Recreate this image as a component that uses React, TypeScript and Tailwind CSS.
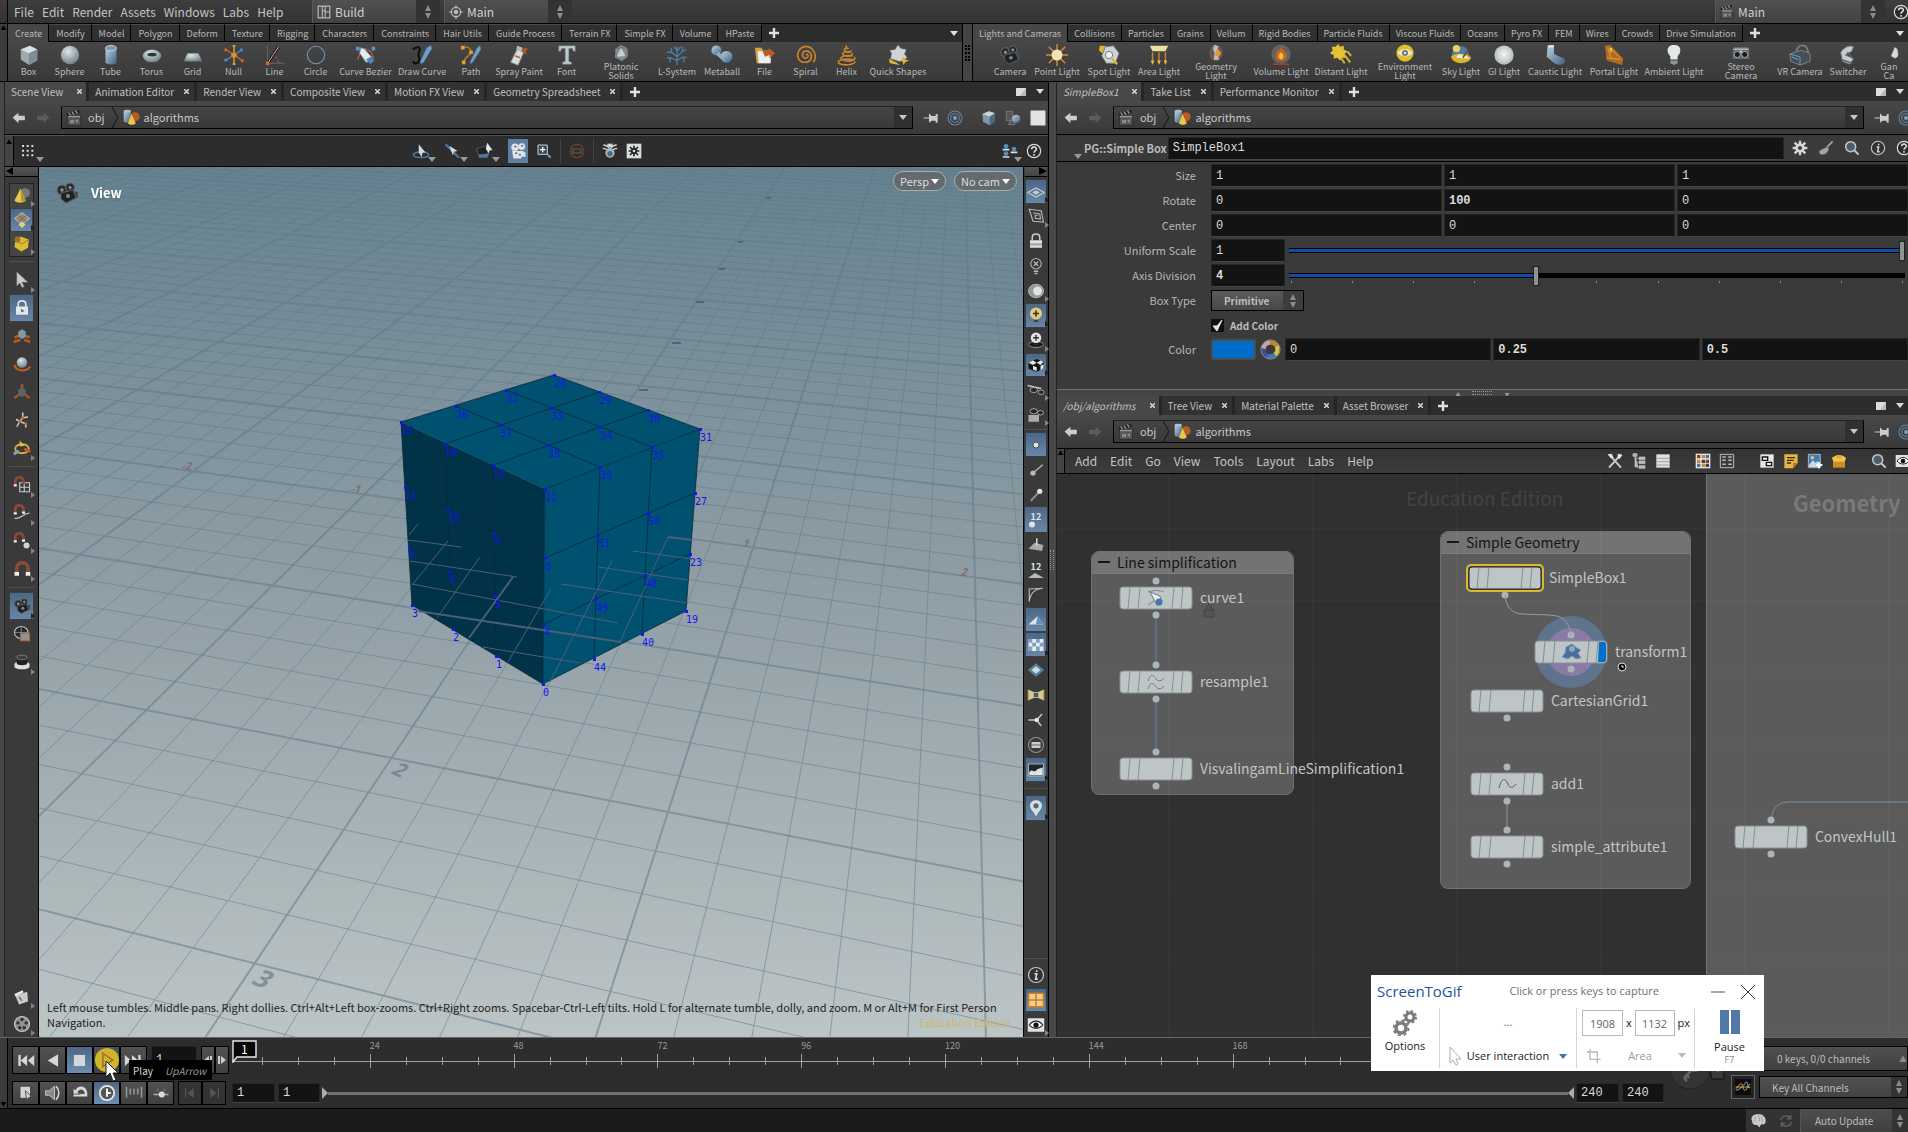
import { useState, type ReactNode } from 'react'
import clsx from 'clsx'

const metal = 'url(#metal)'
const blue = 'url(#blue)'

// 24x24 drawings, shared by the shelves and the toolbars
const glyphs: Record<string, ReactNode> = {
  box: (
    <>
      <path d="M3 6 13 2l8 4v12l-9 5-9-6z" fill="#9aabb0" />
      <path d="M3 6l10-4 8 4-9 4z" fill="#d8e0e2" />
      <path d="M12 10l9-4v12l-9 5z" fill="#7b8f97" />
    </>
  ),
  sphere: <circle cx="12" cy="12" r="10" fill={metal} />,
  tube: (
    <>
      <path d="M6 4v16c0 3 12 3 12 0V4z" fill={blue} />
      <ellipse cx="12" cy="4.5" rx="6" ry="3" fill="#7d99ad" stroke="#c5d3da" />
    </>
  ),
  torus: (
    <>
      <ellipse cx="12" cy="13" rx="10" ry="7" fill={metal} />
      <ellipse cx="12" cy="11.5" rx="5" ry="2" fill="#333" />
    </>
  ),
  grid: <path d="M6 10h12l4 9H2z" fill={metal} />,
  null: (
    <>
      <path d="M12 1v22" stroke="#d9a62e" strokeWidth="1.5" />
      <path d="M3 6l18 12" stroke="#cf6b24" strokeWidth="1.5" />
      <path d="M3 18 21 6" stroke="#4f8cc4" strokeWidth="1.5" />
      <path d="M12 9v6M9 12h6" stroke="#e08f2d" strokeWidth="3" />
      <path d="M12 1v2M12 21v2" stroke="#d9a62e" strokeWidth="3" />
      <path d="M3 5v3M21 17v3" stroke="#cf6b24" strokeWidth="3" />
      <path d="M20 5v3M3 16v3" stroke="#4f8cc4" strokeWidth="3" />
    </>
  ),
  line: (
    <>
      <path d="M4 2v19h18" stroke="#6a6a6a" fill="none" />
      <path d="M4 21 16 3" stroke="#111" strokeWidth="3" />
      <path d="M4 21 16 3" stroke="#ddd" strokeWidth="1" />
      <path d="M9 10l4 4 4 8" stroke="#c45a28" fill="none" strokeDasharray="3 2" />
      <path d="M2 19h4v4H2z" fill="#cf6b24" />
    </>
  ),
  circle: <circle cx="12" cy="12" r="9.5" fill="none" stroke="#7393ab" strokeWidth="1.2" />,
  bezier: (
    <>
      <path d="M3 5h9M3 17C5 5 19 1 20 17" fill="none" stroke="#c2622b" strokeWidth="1.3" />
      <path d="M6 4l4 1 8 9-1 5-5 1-7-10z" fill="#e6ebed" stroke="#5c7f9b" />
      <path d="M12 17l5 5 4-4-4-4z" fill="#4c86bd" />
      <path d="M1 3h4v4H1zM18 3h4v4h-4z" fill="#5a95c9" />
    </>
  ),
  draw: (
    <>
      <path d="M2 6c6-4 9-3 7 2-2 4-1 4 0 7 1 6-5 8-7 4" fill="none" stroke="#0c0c0c" strokeWidth="2.2" />
      <path d="M22 1l-5 3-7 15 1 3 3-2L23 5z" fill="#6f9fc8" stroke="#345a7c" strokeWidth=".7" />
    </>
  ),
  path: (
    <>
      <path d="M3 4c8-3 12 5 6 9-4 3-5 5-5 8" fill="none" stroke="#b9772c" strokeWidth="1.6" />
      <path d="M22 1l-4 4-7 14v3l3-2L23 6z" fill="#6f9fc8" stroke="#345a7c" strokeWidth=".7" />
      <path d="M1 2h4v4H1zM10 7h4v4h-4zM2 18h4v4H2z" fill="#eb9c2f" />
    </>
  ),
  spray: (
    <>
      <path d="M10 6l7 3-6 14-8-3z" fill="#d8dedf" stroke="#8f9ca1" />
      <path d="M10 2l6 2-1 4-6-2z" fill="#b3bec3" />
      <path d="M15 4l7 1-3 3 2 4-5-3z" fill="#b95225" />
      <path d="M8 13l5 2" stroke="#cf5f2c" strokeWidth="2" />
    </>
  ),
  font: <path d="M3 2h18v6h-2l-1-3h-4v14l3 1v2H7v-2l3-1V5H6L5 8H3z" fill="#bcc9cc" stroke="#6c7b80" strokeWidth=".6" />,
  platonic: (
    <>
      <path d="M12 1l9 5v11l-8 6-9-5V7z" fill="#858d90" />
      <path d="M12 5l6 11-12 1z" fill="#c9cfd1" />
      <path d="M12 1v4l9 1-3 10 3 1-8 6-7-6-2-10 8-2" fill="none" stroke="#555c5f" strokeWidth=".7" />
    </>
  ),
  lsystem: (
    <path
      d="M12 23v-9M12 14 6 9M12 14l6-6M12 18l-7-3M12 18l7-4M12 13V3M12 7 9 3M12 8l4-5M6 9V4M6 9H1M5 15H1M18 8V3M18 8l4-2M19 14l4 1M19 14l1 6M5 15l-1 5"
      fill="none"
      stroke="#4d80ab"
      strokeWidth="1.4"
    />
  ),
  metaball: (
    <>
      <circle cx="6" cy="7" r="5.5" fill={blue} />
      <circle cx="17" cy="14" r="6.5" fill={blue} />
      <path d="M7 10l5 5" stroke="#8daec6" strokeWidth="4" />
    </>
  ),
  file: (
    <>
      <path d="M1 4h7l2 3h8v14H3z" fill="#d5a24c" />
      <path d="M4 8h15l-1 13H5z" fill="#eceeee" />
      <path d="M9 7h7V4l7 6-6 6v-4l-5 2z" fill="#bc5a24" />
    </>
  ),
  spiral: (
    <path
      d="M12 12c1-2 3 0 2 2-2 3-6 1-6-2 0-5 6-6 9-2 3 5-1 10-6 10C4 20 1 13 4 8c3-6 11-7 15-2 4 4 4 10 1 14"
      fill="none"
      stroke="#cf8430"
      strokeWidth="1.7"
    />
  ),
  helix: (
    <path
      d="M12 2c-3 1 0 3 2 3M14 5c-6-1-7 3-1 4 3 0 4-1 3-2M16 9C8 7 4 12 11 13c6 1 8-2 6-3M18 13C8 11 1 16 9 18c8 2 13-1 11-4M20 18C13 15 0 17 3 21c5 3 17 2 18-2"
      fill="none"
      stroke="#cf8430"
      strokeWidth="1.7"
    />
  ),
  quick: (
    <>
      <path d="M12 1l3 4 6 1-2 5 3 4-8 4-10-3 1-6-2-3 6-1z" fill="#cfd3d4" stroke="#81888b" strokeWidth=".6" />
      <path d="M2 16l8 4 4 3-11-2zM18 13l2 4 4 1-4 2-2 3-1-4-3-1 3-2z" fill="#d8b92e" />
    </>
  ),
  camera: (
    <>
      <circle cx="7" cy="9" r="5" fill="#2a2d2f" stroke="#676d70" />
      <circle cx="15" cy="6.500" r="4.500" fill="#2a2d2f" stroke="#676d70" />
      <path d="M6 12l12-3 3 8-10 5-5-4z" fill="#1f2122" stroke="#5a6063" />
      <path d="M19 10l4 1v6l-3-1z" fill="#474d50" />
      <circle cx="7" cy="9" r="1.700" fill="#8c9598" />
      <circle cx="15" cy="6.500" r="1.500" fill="#8c9598" />
      <circle cx="13" cy="15" r="2" fill="#7e888c" />
    </>
  ),
  point: (
    <>
      <path d="M12 0v24M0 12h24M3 3l18 18M21 3 3 21" stroke="#d38a2b" strokeWidth="1.6" />
      <circle cx="12" cy="12" r="6" fill="#f0e3b5" />
    </>
  ),
  spot: (
    <>
      <path d="M2 2h6l5 4-6 6-6-5z" fill="#d8b832" />
      <path d="M8 3l9-1 6 8-4 11H9l-5-8z" fill="#cdd3d5" stroke="#6d7578" />
      <circle cx="12" cy="12" r="4" fill="#eff1f1" stroke="#6d7578" />
      <path d="M14 15l7 7" stroke="#d8b832" strokeWidth="2.500" />
    </>
  ),
  area: (
    <>
      <path d="M2 2h20l-3 6H5z" fill="#f1dfa2" />
      <path d="M5 9v12M12 9v12M19 9v12" stroke="#c88428" strokeWidth="1.600" />
      <path d="M3 18h4l-2 5zM10 18h4l-2 5zM17 18h4l-2 5z" fill="#e8b73b" />
    </>
  ),
  geoLight: (
    <>
      <ellipse cx="12" cy="12" rx="9" ry="11" fill="#775a57" opacity=".8" />
      <path d="M10 1l5 2-1 8 2 10h-7l1-9-2-6z" fill="#b9bfc2" />
      <path d="M14 6l5 6-3 5-6-2z" fill="#dd9c2e" />
    </>
  ),
  volume: (
    <>
      <circle cx="12" cy="11" r="10.500" fill="#6c6c6c" opacity=".8" />
      <path d="M12 2c0 5 7 6 6 12-1 6-11 6-12 0 0-3 2-4 2-7 2 1 4-1 4-5z" fill="#cf6524" />
      <path d="M12 9c3 3 4 6 0 8-4-2-3-5 0-8z" fill="#f0c53c" />
      <path d="M3 22h18" stroke="#94481f" strokeWidth="2" />
    </>
  ),
  distant: (
    <>
      <path d="M9 0l2 3 4-1v4l4 2-3 3 1 4-4 0-2 3-3-3-4 1 0-4-4-2 3-3-1-4 4 0z" fill="#e5c234" />
      <path d="M12 15l4 6M16 12l6 8M19 8l4 5" stroke="#dcb62f" strokeWidth="2" />
    </>
  ),
  env: (
    <>
      <circle cx="12" cy="12" r="11.500" fill="#dfbf2c" />
      <path d="M2 12c5-7 15-7 20 0-5 6-15 6-20 0z" fill="#eee7c6" />
      <circle cx="12" cy="12" r="4" fill="#6f7b80" />
      <circle cx="12" cy="12" r="1.500" fill="#f5f5f5" />
    </>
  ),
  sky: (
    <>
      <path d="M2 13C1 4 13-1 18 5l4 9z" fill="#517ca0" />
      <circle cx="7" cy="5" r="4" fill="#ead26b" />
      <path d="M1 14c4-5 18-4 22 1-2 7-19 9-22-1z" fill="#dcb42c" />
      <path d="M7 15c1-5 6-5 8-1 2-2 5 0 5 2z" fill="#e8ecee" />
      <path d="M14 15l6-9" stroke="#754c1a" strokeWidth="1.500" />
    </>
  ),
  gi: <circle cx="12" cy="12" r="10.500" fill="url(#white)" />,
  caustic: (
    <>
      <path d="M4 2l7-1v10l11 5c4 6-7 9-12 4L3 14z" fill={blue} />
      <ellipse cx="7.500" cy="2.500" rx="3.500" ry="1.500" fill="#d8e1e5" />
    </>
  ),
  portal: (
    <>
      <path d="M2 2l6-1 14 15-1 7-17-5z" fill="#b26a22" />
      <path d="M5 4l4 12M4 15l15 2M7 4l12 11" stroke="#e2a62d" />
      <path d="M7 5l3-1-1 6z" fill="#f1d73b" />
    </>
  ),
  bulb: (
    <>
      <path d="M12 1c9 0 8 9 4 12v4H8v-4C4 10 3 1 12 1z" fill="#e4e7e7" />
      <path d="M8 18h8v3l-4 2-4-2z" fill="#8d9496" />
    </>
  ),
  stereo: (
    <>
      <path d="M1 7l2-3h18l2 3v13H1z" fill="#636b6f" />
      <path d="M2 6h20v2H2z" fill="#b4bcbf" />
      <circle cx="7" cy="14" r="4" fill="#16191a" stroke="#c3cbce" />
      <circle cx="17" cy="14" r="4" fill="#16191a" stroke="#c3cbce" />
      <circle cx="12" cy="10" r="1.500" fill="#d9dfe1" />
    </>
  ),
  vr: (
    <>
      <path d="M1 11 13 7l10 3v9l-11 4L2 19z" fill="#454e54" stroke="#7b8a92" />
      <path d="M1 11l11 3v9" fill="none" stroke="#8a9ba4" />
      <path d="M8 8c2-8 12-10 13 2" fill="none" stroke="#757f84" strokeWidth="2" />
      <path d="M3 14l7 3" stroke="#4c94d2" strokeWidth="1.500" />
    </>
  ),
  switcher: (
    <>
      <path d="M4 9c4-6 10-8 14-6l-2 5-7 4 9 4-4 6-8-3z" fill="#c6cccd" stroke="#6e7678" />
      <path d="M11 9l7 7M5 17l12 4" stroke="#585f61" strokeWidth="1.500" />
    </>
  ),
  gamepad: <path d="M13 1c6-1 8 8 7 18l-6 4-8-5z" fill="#d8dcdd" stroke="#777" />,
  arrowL: <path d="M1 11 11 3v5h11v8H11v5z" fill="#c9cfd1" />,
  arrowR: <path d="M23 11 13 3v5H2v8h11v5z" fill="#5c5c5c" />,
  clap: (
    <>
      <path d="M2 10h20v13H2z" fill="#565656" stroke="#222" />
      <path d="M1 5 20 0l1 4L2 9z" fill="#222" />
      <path d="M4 4l3 4M9 3l3 4M14 1l3 4M3 10h18" stroke="#9b9b9b" strokeWidth="2" />
      <path d="M6 15h6v5H6zM13 16l5-2v6z" fill="#898989" />
    </>
  ),
  geo: (
    <>
      <path d="M1 3v14c0 3 10 3 10 0V3z" fill={blue} />
      <ellipse cx="6" cy="3" rx="5" ry="2" fill="#a5c1d6" />
      <circle cx="17" cy="11" r="6.500" fill="#b85b23" />
      <path d="M12 7l6 13c-3 3-8 3-11 0z" fill="#e9c64d" />
    </>
  ),
  pin: (
    <>
      <path d="M1 12h8" stroke="#c7cdcf" strokeWidth="1.500" />
      <path d="M9 5l4 4h6V6h3v13h-3v-3h-6l-4 3z" fill="#c7cdcf" />
    </>
  ),
  target: (
    <g fill="none" stroke="#6486a3" strokeWidth="1.600">
      <circle cx="12" cy="12" r="10.500" />
      <circle cx="12" cy="12" r="6.500" />
      <circle cx="12" cy="12" r="2.500" fill="#8bb0cf" />
    </g>
  ),
  shaded: (
    <>
      <path d="M2 6l10-4 9 3v12l-8 6L3 18z" fill="#7d97a8" />
      <path d="M2 6l10-4 9 3-8 5z" fill="#c8d3d9" />
      <path d="M13 10l8-5v12l-8 6z" fill="#52697a" />
    </>
  ),
  shapes: (
    <>
      <path d="M2 2h9v14H2zM12 10l-7 12h10z" fill="#555" stroke="#8b8b8b" />
      <circle cx="17" cy="13" r="6" fill={blue} />
    </>
  ),
  white: <path d="M2 2h20v20H2z" fill="#dfe3e4" />,
  dots: (
    <path d="M3 3h3v3H3zM10 3h3v3h-3zM17 3h3v3h-3zM3 10h3v3H3zM10 10h3v3h-3zM17 10h3v3h-3zM3 17h3v3H3zM10 17h3v3h-3zM17 17h3v3h-3z" fill="#dcdcdc" />
  ),
  orbitPick: (
    <>
      <path d="M2 17c0-5 20-5 20 0s-20 5-20 0z" fill="none" stroke="#4a7aa6" strokeWidth="2" />
      <path d="M9 3l9 11-4 0-1 6-4-6z" fill="#d7dbdc" />
    </>
  ),
  arrowPick: (
    <>
      <path d="M2 3l18 18" stroke="#4a7aa6" strokeWidth="3" />
      <path d="M7 5l11 7-5 1-1 5z" fill="#d7dbdc" />
    </>
  ),
  camPick: (
    <>
      <path d="M1 9l12-4 6 4-5 8H3z" fill="#1f2224" stroke="#666" />
      <path d="M3 17l15-2-3 6H4z" fill="#4a7aa6" />
      <path d="M15 1l7 10-4 0-1 4-4-6z" fill="#e3e6e7" />
    </>
  ),
  reel: (
    <>
      <circle cx="8" cy="7" r="5" fill="#dfe3e3" />
      <circle cx="17" cy="6" r="4.500" fill="#dfe3e3" />
      <path d="M4 12h14l4 2v6l-4-1-2 3H6z" fill="#dfe3e3" />
      <path d="M7 6h3M16 5h3M8 15h3M13 17h3" stroke="#5b6f82" strokeWidth="2" />
    </>
  ),
  zoomBox: (
    <>
      <path d="M3 3h14v14H3z" fill="#364d60" stroke="#c8cfd2" strokeWidth="1.500" />
      <path d="M10 6v8M6 10h8" stroke="#fff" strokeWidth="2" />
      <path d="M16 16l6 6" stroke="#8d979b" strokeWidth="3" />
    </>
  ),
  noRect: (
    <g fill="none" stroke="#7a3b2c" strokeWidth="1.800">
      <circle cx="12" cy="12" r="10" />
      <path d="M6 9h12v6H6z" stroke="#5e5e5e" />
    </g>
  ),
  bug: (
    <>
      <path d="M2 3c6 0 8 4 10 6 2-2 4-6 10-6M1 8c5 0 7 2 11 4 4-2 6-4 11-4" fill="none" stroke="#cfd5d6" strokeWidth="2" />
      <circle cx="12" cy="15" r="7" fill="#aab7bd" />
      <circle cx="12" cy="16" r="4" fill="#456c8d" />
      <path d="M8 1h8v5H8z" fill="#cfd5d6" />
    </>
  ),
  gearBox: (
    <>
      <path d="M1 1h22v22H1z" fill="#dadddd" />
      <path d="M12 4v16M4 12h16M6 6l12 12M18 6 6 18" stroke="#222" strokeWidth="2.500" />
      <circle cx="12" cy="12" r="4.500" fill="#222" />
      <circle cx="12" cy="12" r="2" fill="#dadddd" />
    </>
  ),
  snaps: (
    <>
      <circle cx="6" cy="5" r="3.500" fill="#4e90bd" />
      <circle cx="6" cy="16" r="3.500" fill="#4e90bd" />
      <circle cx="18" cy="9" r="3.500" fill="#4e90bd" />
      <path d="M1 10h10M1 21h10M13 14h10" stroke="#d8dfe2" strokeWidth="2.500" />
    </>
  ),
  help: (
    <>
      <circle cx="12" cy="12" r="10" fill="#2b2b2b" stroke="#dadada" strokeWidth="1.800" />
      <path d="M8.500 9.500c0-4.500 7-4.500 7-.5 0 3-3.500 2.500-3.500 5.500M12 16.500v2.500" fill="none" stroke="#e4e4e4" strokeWidth="2.300" />
    </>
  ),
  info: (
    <>
      <circle cx="12" cy="12" r="10" fill="#2f3335" stroke="#c4c8c9" strokeWidth="1.600" />
      <path d="M13 5.500v2.500M10 10.500h3l-1.500 7h3" fill="none" stroke="#dadada" strokeWidth="2.200" />
    </>
  ),
  gear: (
    <>
      <path d="M12 1v22M1 12h22M4 4l16 16M20 4 4 20" stroke="#d5d8d9" strokeWidth="3.500" />
      <circle cx="12" cy="12" r="7" fill="#d5d8d9" />
      <circle cx="12" cy="12" r="3" fill="#3a3a3a" />
    </>
  ),
  scoop: (
    <>
      <path d="M22 2l-9 9" stroke="#a0a6a8" strokeWidth="2.500" />
      <path d="M2 16l12-6c5 4-1 12-7 12-4 0-6-2-5-6z" fill="#a0a6a8" stroke="#5c6264" />
    </>
  ),
  search: (
    <>
      <circle cx="10" cy="10" r="7.500" fill="#4a5e6d" stroke="#c2c7c9" strokeWidth="2.200" />
      <path d="M15 15l7 7" stroke="#c2c7c9" strokeWidth="3" />
    </>
  ),
  build: <path d="M2 2h20v20H2zM9 2v20M9 10h5M14 2v20M14 12h8" fill="none" stroke="#b6b9ba" strokeWidth="2" />,
  aim: (
    <g fill="none" stroke="#b9bdbe" strokeWidth="2">
      <circle cx="12" cy="12" r="8" />
      <path d="M12 0v6M12 18v6M0 12h6M18 12h6" />
      <circle cx="12" cy="12" r="3" fill="#b9bdbe" />
    </g>
  ),
  cone: (
    <>
      <circle cx="16" cy="8" r="6.500" fill="#77797a" />
      <path d="M10 2l7 16c-3 4-12 4-15 0z" fill="#e3c84f" />
      <path d="M10 2l7 16-6 2z" fill="#b89423" />
    </>
  ),
  tiles: (
    <>
      <path d="M12 2l10 8-10 8-10-8z" fill="#9a8a66" stroke="#d4d4d4" />
      <path d="M7 6l10 8M17 6 7 14" stroke="#54626c" />
      <path d="M8 18l4-3 4 3-4 4z" fill="#f0cf4b" stroke="#fff" strokeWidth=".7" />
    </>
  ),
  yellowBox: (
    <>
      <path d="M3 8l7-6 11 4-1 11-9 5-9-6z" fill="#d9bd35" />
      <path d="M3 8l9 4 9-6" fill="none" stroke="#8b6c11" />
      <circle cx="6" cy="6" r="4" fill="#a1702e" />
    </>
  ),
  select: <path d="M5 1l15 14-8 0 3 6-3 1-3-6-4 4z" fill="#c6cbcc" stroke="#666" strokeWidth=".7" />,
  lockFill: (
    <>
      <path d="M7 11V7c0-6 10-6 10 0v4" fill="none" stroke="#e2e6e7" strokeWidth="2.200" />
      <path d="M4 10h16v11H4z" fill="#e2e6e7" />
      <path d="M11 13l4 3-4 2z" fill="#42596b" />
    </>
  ),
  lock: (
    <>
      <path d="M7 11V7c0-6 10-6 10 0v4" fill="none" stroke="#c9cdce" strokeWidth="2" />
      <path d="M4 11h16v10H4z" fill="#dfe2e2" />
      <path d="M4 15h16v3H4z" fill="#a0a6a8" />
    </>
  ),
  moveObj: (
    <>
      <path d="M2 14l8-3M22 14l-8-3M1 20l9-3M23 20l-8-3" stroke="#b85a25" strokeWidth="3.500" />
      <path d="M7 6l5-3 5 3v7l-5 3-5-3z" fill="#819aa9" />
    </>
  ),
  rotObj: (
    <>
      <path d="M3 13c-3 9 19 10 19 2" fill="none" stroke="#b85a25" strokeWidth="3" />
      <circle cx="12" cy="10" r="7" fill={metal} />
    </>
  ),
  scaleObj: (
    <>
      <path d="M12 1v8M2 20l8-6M22 20l-8-6" stroke="#a94f25" strokeWidth="3.500" />
      <path d="M7 9l5-3 5 3v7l-5 3-5-3z" fill="#59646b" />
    </>
  ),
  pose: (
    <>
      <path d="M13 2v7l-4 5-5-3M13 9l7-1M9 14l8 3v5M9 14l-4 7" fill="none" stroke="#c9ced0" strokeWidth="2" />
      <circle cx="13" cy="9" r="2" fill="#c86a28" />
      <circle cx="9" cy="14" r="2" fill="#c86a28" />
      <circle cx="17" cy="17" r="2" fill="#c86a28" />
    </>
  ),
  handles: (
    <>
      <ellipse cx="12" cy="13" rx="9" ry="6" fill="none" stroke="#e0ad35" strokeWidth="2.500" />
      <path d="M9 10V2l6 7" fill="#dfc04a" />
      <path d="M1 20l7-4" stroke="#7ca6c8" strokeWidth="4" />
      <path d="M15 13l8 4" stroke="#b85a25" strokeWidth="4" />
    </>
  ),
  magnetGrid: (
    <>
      <path d="M9 9h13v12H9zM15 9v12M9 15h13" fill="none" stroke="#c9cdce" strokeWidth="1.500" />
      <path d="M3 12V7c0-7 11-7 11 0v4" fill="none" stroke="#8c4a34" strokeWidth="3.500" />
      <path d="M1 11h4v3H1z" fill="#eee" />
    </>
  ),
  magnetCurve: (
    <>
      <path d="M3 12V7c0-7 11-7 11 0v4" fill="none" stroke="#8c4a34" strokeWidth="3.500" />
      <path d="M2 19c8 2 10-6 20-7" fill="none" stroke="#c9cdce" strokeWidth="1.500" />
      <path d="M1 11h4v3H1zM12 10h4v3h-4z" fill="#eee" />
    </>
  ),
  magnetPoint: (
    <>
      <path d="M3 12V7c0-7 11-7 11 0v4" fill="none" stroke="#8c4a34" strokeWidth="3.500" />
      <path d="M1 11h4v3H1zM12 10h4v3h-4z" fill="#eee" />
      <circle cx="18" cy="18" r="4" fill="#cfd4d5" />
    </>
  ),
  magnet: (
    <>
      <path d="M5 17v-6C5 1 20 1 20 11v6" fill="none" stroke="#8c4a34" strokeWidth="5" />
      <path d="M2 16h6v5H2zM17 16h6v5h-6z" fill="#eee" />
    </>
  ),
  globe: (
    <>
      <ellipse cx="11" cy="10" rx="9" ry="8" fill="#24292c" stroke="#b9bfc1" strokeWidth="1.500" />
      <path d="M11 2v16M2 10h18" stroke="#9aa2a5" />
      <path d="M10 11h12v10H10z" fill="#8c9497" stroke="#c4622a" strokeWidth="1.500" />
    </>
  ),
  lens: (
    <>
      <path d="M2 15c0-5 20-5 20 0v3c0 5-20 5-20 0z" fill="#dde0e1" />
      <path d="M5 6c0-4 14-4 14 0v8c0 3-14 3-14 0z" fill="#1c1e1f" />
      <ellipse cx="12" cy="6" rx="7" ry="3" fill="#3b4043" stroke="#888" />
    </>
  ),
  slate: (
    <>
      <path d="M3 10l16-5 1 13-12 4z" fill="#c7cccd" />
      <path d="M2 8l11-5 1 3-11 5z" fill="#eee" />
      <path d="M8 12l4 5" stroke="#b85a25" strokeWidth="2" />
    </>
  ),
  filmReel: (
    <>
      <circle cx="12" cy="12" r="10" fill="#8b9092" stroke="#c6cacb" strokeWidth="1.500" />
      <g fill="#303334">
        <circle cx="12" cy="6" r="2.300" />
        <circle cx="6.500" cy="10.500" r="2.300" />
        <circle cx="17.500" cy="10.500" r="2.300" />
        <circle cx="9" cy="17" r="2.300" />
        <circle cx="15" cy="17" r="2.300" />
      </g>
    </>
  ),
  plane: (
    <>
      <path d="M1 14l11-6 11 6-11 6z" fill="none" stroke="#c3cacd" strokeWidth="1.800" />
      <path d="M7 14l5-3 5 3-5 3z" fill="#c3cacd" />
    </>
  ),
  uv: <path d="M3 3l16 2 3 15-14-1zM8 8l9 1 1 7-7-1 0-4h4" fill="none" stroke="#b0b4b5" strokeWidth="1.600" />,
  bulbOff: (
    <>
      <circle cx="12" cy="9" r="7" fill="#2f3335" stroke="#b5babb" strokeWidth="1.500" />
      <path d="M9 6l6 6M15 6l-6 6M9 19h6M10 22h4" stroke="#b5babb" strokeWidth="1.800" />
    </>
  ),
  headlight: (
    <>
      <ellipse cx="12" cy="12" rx="10" ry="9" fill="#8f9799" stroke="#c8cdce" />
      <ellipse cx="14" cy="12" rx="6" ry="6" fill="#dde1e1" />
    </>
  ),
  bulbPlus: (
    <>
      <circle cx="12" cy="10" r="8" fill="#e0cd75" />
      <path d="M12 6v8M8 10h8M9 20h6" stroke="#2d3336" strokeWidth="2.200" />
    </>
  ),
  bulbShadow: (
    <>
      <ellipse cx="12" cy="18" rx="10" ry="4" fill="#1a1a1a" stroke="#aaa" />
      <circle cx="12" cy="9" r="7" fill="#e2e5e5" />
      <path d="M12 5v8M8 9h8M10 18h4" stroke="#333" strokeWidth="2" />
    </>
  ),
  checker: (
    <>
      <path d="M2 9l11-5 9 4v8l-9 5-11-4z" fill="#111" />
      <path d="M2 9l6-3 5 3-5 3zM13 9l5-3 4 2-4 4zM8 13l5 2v5l-5-2zM18 13l4-2v5l-4 3z" fill="#e6e8e8" />
    </>
  ),
  specs: (
    <>
      <path d="M1 6l8 2 10 2" stroke="#c4c9ca" strokeWidth="1.800" />
      <ellipse cx="9" cy="12" rx="5" ry="3.500" fill="#252829" stroke="#c4c9ca" />
      <ellipse cx="19" cy="15" rx="4" ry="3" fill="#252829" stroke="#c4c9ca" />
    </>
  ),
  specsCam: (
    <>
      <ellipse cx="9" cy="7" rx="5" ry="3.500" fill="#252829" stroke="#c4c9ca" />
      <ellipse cx="18" cy="9" rx="4" ry="3" fill="#252829" stroke="#c4c9ca" />
      <path d="M2 12h14v9H2z" fill="#a8aeb0" />
    </>
  ),
  dot: <circle cx="12" cy="12" r="4" fill="#dfe3e4" stroke="#26313a" />,
  normal: (
    <>
      <path d="M8 16 21 5" stroke="#b5b9ba" strokeWidth="1.800" />
      <circle cx="8" cy="16" r="3.500" fill="#b5b9ba" />
    </>
  ),
  trail: (
    <>
      <path d="M5 20 16 8" stroke="#8c9091" strokeWidth="2.500" />
      <circle cx="17" cy="7" r="3.500" fill="#dfe3e4" />
    </>
  ),
  prim: (
    <>
      <path d="M2 17l8-8 12 3-2 8z" fill="#a6abac" />
      <path d="M13 13V3" stroke="#d6dadb" strokeWidth="2" />
    </>
  ),
  hull: <path d="M3 21V4l18-1M3 21C4 11 10 4 21 3" fill="none" stroke="#b5b9ba" strokeWidth="1.500" />,
  wedge: (
    <>
      <path d="M2 18l12-11 8 11z" fill="#dfe4e6" />
      <path d="M14 7l8 11H12z" fill="#5e93bd" />
    </>
  ),
  checkFlat: (
    <>
      <path d="M2 4h20v16H2z" fill="#e8ecee" />
      <path d="M2 4h5v5H2zM12 4h5v5h-5zM7 9h5v5H7zM17 9h5v5h-5zM2 14h5v6H2zM12 14h5v6h-5z" fill="#7ea0bb" />
    </>
  ),
  diamond: (
    <>
      <path d="M12 3l11 9-11 9L1 12z" fill="#56809f" />
      <path d="M12 7l6 5-6 5-6-5z" fill="#cfdae1" />
    </>
  ),
  bowtie: (
    <>
      <path d="M2 5l7 3h6l7-3v14l-7-3H9l-7 3z" fill="#d1c9a3" />
      <path d="M2 5v14M22 5v14" stroke="#d2b12c" strokeWidth="2" />
      <path d="M9 9h6v6H9z" fill="#55585a" />
    </>
  ),
  axis: (
    <>
      <path d="M13 12H2M13 12l7-8M13 12l6 8" stroke="#c7cbcc" strokeWidth="1.800" />
      <circle cx="13" cy="12" r="3" fill="#e2e5e5" />
    </>
  ),
  list: (
    <>
      <circle cx="12" cy="12" r="10" fill="none" stroke="#8b9092" strokeWidth="1.500" />
      <path d="M6 8h12v8H6z" fill="#c9cdce" />
      <path d="M6 12h12" stroke="#444" />
    </>
  ),
  image: (
    <>
      <path d="M2 4h20v16H2z" fill="#1f2426" stroke="#c7cbcc" />
      <path d="M3 15c4-6 6 2 10-3 2-3 5-1 8-4v11H3z" fill="#dfe3e4" />
    </>
  ),
  mapPin: (
    <>
      <path d="M12 23C8 16 4 13 4 9c0-10 16-10 16 0 0 4-4 7-8 14z" fill="#d9dee0" />
      <circle cx="12" cy="9" r="3.500" fill="#51687a" />
    </>
  ),
  quad: (
    <>
      <path d="M2 3h20v18H2z" fill="#e8d28e" stroke="#d47a23" strokeWidth="2" />
      <path d="M12 3v18M2 12h20" stroke="#d47a23" strokeWidth="2" />
    </>
  ),
  eye: (
    <>
      <path d="M1 3h22v18H1z" fill="#dfe2e3" />
      <path d="M3 12c5-7 13-7 18 0-5 6-13 6-18 0z" fill="#fff" stroke="#222" strokeWidth="1.500" />
      <circle cx="12" cy="12" r="3.500" fill="#111" />
    </>
  ),
  tools: (
    <>
      <path d="M3 2l18 20M21 2 3 22" stroke="#c7cbcc" strokeWidth="3" />
      <path d="M1 2l6-1 3 6-4 1zM16 1l7 2-4 6-3-2z" fill="#e0e3e4" />
    </>
  ),
  tree: <path d="M6 1v20h5M6 8h5M6 14h5M12 6h9v4h-9zM12 12h9v4h-9zM12 19h9v4h-9zM3 1h6v4H3z" fill="#bbb" stroke="#bbb" strokeWidth="1.200" />,
  rows: (
    <>
      <path d="M2 2h20v20H2z" fill="#dfe2e2" />
      <path d="M2 8h20M2 13h20M2 18h20" stroke="#9ca2a3" strokeWidth="1.500" />
    </>
  ),
  palette: (
    <>
      <path d="M1 1h22v22H1z" fill="#e5e7e7" />
      <path d="M3 3h5v5H3zM16 10h5v5h-5z" fill="#8b3b27" />
      <path d="M10 3h5v5h-5zM10 16h5v5h-5zM3 10h5v5H3z" fill="#d68a29" />
      <path d="M16 3h5v5h-5zM3 16h5v5H3z" fill="#3e78aa" />
      <path d="M10 10h5v5h-5zM16 16h5v5h-5z" fill="#364550" />
    </>
  ),
  outline: (
    <>
      <path d="M2 2h20v20H2z" fill="#3b3b3b" stroke="#b8bcbd" strokeWidth="1.500" />
      <path d="M5 6h5M14 6h5M5 11h5M14 11h5M5 17h5M14 17h5" stroke="#b8bcbd" strokeWidth="2.200" />
    </>
  ),
  netBox: (
    <>
      <path d="M2 2h20v20H2z" fill="#e6e8e8" />
      <path d="M5 6h8v5H5zM11 14h8v5h-8z" fill="#eee" stroke="#111" strokeWidth="2" />
    </>
  ),
  note: (
    <>
      <path d="M2 2h20v13l-7 8H2z" fill="#e1b548" />
      <path d="M6 7h12M6 11h10M6 15h6" stroke="#3b2c08" strokeWidth="2" />
      <path d="M22 15h-7v8z" fill="#a87d21" />
    </>
  ),
  addImage: (
    <>
      <path d="M2 2h18v20H2z" fill="#3f7fbd" stroke="#dde1e2" />
      <path d="M3 18l6-7 4 4 3-3 4 4v5H3z" fill="#cfdbe4" />
      <circle cx="8" cy="7" r="2.500" fill="#ecd04b" />
      <path d="M18 14v9M14 18h9" stroke="#fff" strokeWidth="3" />
    </>
  ),
  asset: (
    <>
      <path d="M3 12h18v10H3z" fill="#c98d26" />
      <path d="M1 7l6-3h11l5 4-3 5H4z" fill="#efc34d" />
      <path d="M8 3h8v5H8z" fill="#e3a836" />
    </>
  ),
  wheel: (
    <g fill="none" strokeWidth="5">
      <path d="M12 4a8 8 0 0 1 7 4" stroke="#c9822f" />
      <path d="M19 8a8 8 0 0 1-2 10" stroke="#d9c043" />
      <path d="M17 18a8 8 0 0 1-9 1" stroke="#3b78bd" />
      <path d="M8 19a8 8 0 0 1-4-8" stroke="#3d4f9b" />
      <path d="M4 11a8 8 0 0 1 8-7" stroke="#c3a3a0" />
      <circle cx="12" cy="12" r="11" stroke="#8e9496" strokeWidth="1" />
    </g>
  ),
  curves: (
    <>
      <path d="M0 0h24v24H0z" fill="#0b0b0b" />
      <path d="M1 14c4 0 4-7 8-7s2 10 6 10 3-9 8-9" fill="none" stroke="#cf7a2c" strokeWidth="1.600" />
      <path d="M1 16c6 2 8-4 11-6s4-7 6-5 0 9 5 8" fill="none" stroke="#4c8cc8" strokeWidth="1.600" />
      <path d="M1 12h22" stroke="#e2cb4e" strokeWidth="1.200" />
    </>
  ),
  brain: (
    <>
      <path d="M3 13c-3-6 2-10 7-10 7-1 13 4 12 10 0 5-4 5-6 4l-3 5-3-4c-4 1-7-1-7-5z" fill="#c9cccd" />
      <path d="M7 6c2 3-2 5 1 8M12 4c-1 4 3 4 1 9M17 6c-2 3 2 5 0 9" fill="none" stroke="#85898a" />
    </>
  ),
  refresh: <path d="M3 10c1-7 12-9 17-3M20 2v6h-6M21 14c-1 7-12 9-17 3M4 22v-6h6" fill="none" stroke="#626262" strokeWidth="2.500" />,
  crop: <path d="M6 1v16h16M1 6h16v17" fill="none" stroke="#b5babd" strokeWidth="2" />,
}

function Icon({ name, className = 'size-4' }: { name: string; className?: string }) {
  return (
    <svg viewBox="0 0 24 24" className={clsx('shrink-0', className)} aria-hidden="true">
      {glyphs[name]}
    </svg>
  )
}

function Down({ className }: { className?: string }) {
  return (
    <svg viewBox="0 0 8 5" className={clsx('h-[5px] w-2 shrink-0', className)} aria-hidden="true">
      <path d="M0 0h8L4 5z" fill="currentColor" />
    </svg>
  )
}

function UpDown() {
  return (
    <svg viewBox="0 0 8 14" className="h-3.5 w-2 shrink-0 text-[#8c8c8c]" aria-hidden="true">
      <path d="M4 0l3 6H1zM4 14 1 8h6z" fill="currentColor" />
    </svg>
  )
}

function Plus() {
  return (
    <button type="button" aria-label="Add tab" className="flex w-6 items-center justify-center">
      <svg viewBox="0 0 10 10" className="size-2.5" aria-hidden="true">
        <path d="M5 0v10M0 5h10" stroke="#e0e0e0" strokeWidth="2.400" />
      </svg>
    </button>
  )
}

interface Tool {
  label: string
  icon: string
  w: string
}

const CREATE_TABS = ['Create', 'Modify', 'Model', 'Polygon', 'Deform', 'Texture', 'Rigging', 'Characters', 'Constraints', 'Hair Utils', 'Guide Process', 'Terrain FX', 'Simple FX', 'Volume', 'HPaste']
const LIGHT_TABS = ['Lights and Cameras', 'Collisions', 'Particles', 'Grains', 'Vellum', 'Rigid Bodies', 'Particle Fluids', 'Viscous Fluids', 'Oceans', 'Pyro FX', 'FEM', 'Wires', 'Crowds', 'Drive Simulation']

const CREATE_TOOLS: Tool[] = [
  { label: 'Box', icon: 'box', w: 'w-[41px]' },
  { label: 'Sphere', icon: 'sphere', w: 'w-[41px]' },
  { label: 'Tube', icon: 'tube', w: 'w-[41px]' },
  { label: 'Torus', icon: 'torus', w: 'w-[41px]' },
  { label: 'Grid', icon: 'grid', w: 'w-[41px]' },
  { label: 'Null', icon: 'null', w: 'w-[41px]' },
  { label: 'Line', icon: 'line', w: 'w-[41px]' },
  { label: 'Circle', icon: 'circle', w: 'w-[41px]' },
  { label: 'Curve Bezier', icon: 'bezier', w: 'w-[59px]' },
  { label: 'Draw Curve', icon: 'draw', w: 'w-[54px]' },
  { label: 'Path', icon: 'path', w: 'w-[44px]' },
  { label: 'Spray Paint', icon: 'spray', w: 'w-[52px]' },
  { label: 'Font', icon: 'font', w: 'w-[43px]' },
  { label: 'Platonic Solids', icon: 'platonic', w: 'w-[66px]' },
  { label: 'L-System', icon: 'lsystem', w: 'w-[46px]' },
  { label: 'Metaball', icon: 'metaball', w: 'w-[44px]' },
  { label: 'File', icon: 'file', w: 'w-[41px]' },
  { label: 'Spiral', icon: 'spiral', w: 'w-[41px]' },
  { label: 'Helix', icon: 'helix', w: 'w-[41px]' },
  { label: 'Quick Shapes', icon: 'quick', w: 'w-[62px]' },
]

const LIGHT_TOOLS: Tool[] = [
  { label: 'Camera', icon: 'camera', w: 'w-[44px]' },
  { label: 'Point Light', icon: 'point', w: 'w-[50px]' },
  { label: 'Spot Light', icon: 'spot', w: 'w-[54px]' },
  { label: 'Area Light', icon: 'area', w: 'w-[46px]' },
  { label: 'Geometry Light', icon: 'geoLight', w: 'w-[68px]' },
  { label: 'Volume Light', icon: 'volume', w: 'w-[62px]' },
  { label: 'Distant Light', icon: 'distant', w: 'w-[58px]' },
  { label: 'Environment Light', icon: 'env', w: 'w-[70px]' },
  { label: 'Sky Light', icon: 'sky', w: 'w-[42px]' },
  { label: 'GI Light', icon: 'gi', w: 'w-[44px]' },
  { label: 'Caustic Light', icon: 'caustic', w: 'w-[58px]' },
  { label: 'Portal Light', icon: 'portal', w: 'w-[60px]' },
  { label: 'Ambient Light', icon: 'bulb', w: 'w-[60px]' },
  { label: 'Stereo Camera', icon: 'stereo', w: 'w-[74px]' },
  { label: 'VR Camera', icon: 'vr', w: 'w-[44px]' },
  { label: 'Switcher', icon: 'switcher', w: 'w-[52px]' },
]

const TWO_LINE = ['Platonic Solids', 'Geometry Light', 'Environment Light', 'Stereo Camera']

function Shelf({ tabs, tools, tight }: { tabs: string[]; tools: Tool[]; tight?: boolean }) {
  return (
    <>
      <div className="flex h-[18px] bg-[#2c2c2c]">
        {tabs.map((tab, i) => (
          <button
            key={tab}
            type="button"
            className={clsx(
              'shrink-0 border-r border-r-black pr-1.5 text-[9px] leading-[17px] text-[#b9b9b9]',
              tight ? 'pl-1.5' : 'pl-[7px]',
              i === 0 ? 'bg-[#474747]' : 'border-b border-b-black border-t border-t-[#4a4a4a] bg-[#303030]',
            )}
          >
            {tab}
          </button>
        ))}
        <Plus />
        <span className="ml-auto flex w-3 items-center">
          <Down className="text-[#e0e0e0]" />
        </span>
      </div>
      <div className={clsx('flex flex-1 overflow-hidden bg-linear-to-b from-[#464646] to-[#393939]', tight && 'pl-[15px]')}>
        {tools.map((t) => (
          <button key={t.label} type="button" className={clsx('flex shrink-0 flex-col items-center pt-0.5', t.w)}>
            <Icon name={t.icon} className={TWO_LINE.includes(t.label) ? 'size-[18px]' : 'size-[22px]'} />
            <span
              className={clsx(
                'text-[9px] text-[#b9b9b9]',
                TWO_LINE.includes(t.label) ? 'w-min text-center leading-[9px]' : 'leading-[12px] whitespace-nowrap',
              )}
            >
              {t.label}
            </span>
          </button>
        ))}
        {tight && (
          <button type="button" className="ml-1 flex w-[22px] shrink-0 flex-col items-end overflow-hidden pt-0.5">
            <Icon name="gamepad" className="h-[18px] w-3" />
            <span className="w-full text-center text-[9px] leading-[9px] text-[#b9b9b9]">Gan Ca</span>
          </button>
        )}
      </div>
    </>
  )
}

function TopBar() {
  return (
    <header className="flex h-[23px] shrink-0 items-stretch bg-linear-to-b from-[#3d3d3d] to-[#333] pl-[7px]">
      <nav className="flex w-[305px] items-center gap-2 border-l border-black pl-1.5 text-[12px] text-[#c4c4c4]">
        {['File', 'Edit', 'Render', 'Assets', 'Windows', 'Labs', 'Help'].map((m) => (
          <button key={m} type="button">
            {m}
          </button>
        ))}
      </nav>
      <DeskMenu icon="build" label="Desktop" value="Build" width="w-[128px]" />
      <span className="w-1" />
      <DeskMenu icon="aim" label="Radial menu" value="Main" width="w-[128px]" />
      <span className="flex-1" />
      <DeskMenu icon="clap" label="Take" value="Main" width="w-[170px]" />
      <span className="flex w-[23px] items-center overflow-hidden pl-2">
        <Icon name="help" />
      </span>
    </header>
  )
}

function DeskMenu({ icon, label, value, width }: { icon: string; label: string; value: string; width: string }) {
  return (
    <label className={clsx('flex items-center border-l border-[#5a5a5a] bg-linear-to-b from-[#505050] to-[#424242]', width)}>
      <Icon name={icon} className="ml-1 size-3.5" />
      <select aria-label={label} className="min-w-0 flex-1 appearance-none bg-transparent pl-1 text-[12px] leading-[20px] text-[#cfcfcf]">
        <option>{value}</option>
      </select>
      <span className="flex w-6 items-center justify-center self-stretch bg-[#333]">
        <UpDown />
      </span>
    </label>
  )
}

function PaneTabs({ tabs }: { tabs: string[] }) {
  return (
    <div className="flex h-[19px] shrink-0 bg-[#2d2d2d]">
      {tabs.map((tab, i) => (
        <button
          key={tab}
          type="button"
          className={clsx(
            'flex shrink-0 items-center border-r-3 border-[#252525] pl-1.5 text-[10px] leading-[18px] text-[#c0c0c0]',
            i === 0 ? 'gap-3.5 bg-[#484848] pr-1' : 'gap-2.5 bg-[#323232] pr-[5px]',
            i === 0 && tabs.length < 5 && 'italic',
          )}
        >
          {tab}
          <svg viewBox="0 0 6 6" className="size-[5px]" aria-hidden="true">
            <path d="M0 0l6 6M6 0 0 6" stroke="#d5d5d5" strokeWidth="1.800" />
          </svg>
        </button>
      ))}
      <Plus />
      <span className="ml-auto flex items-center gap-2.5 pr-1">
        <svg viewBox="0 0 10 8" className="h-2 w-2.5" aria-hidden="true">
          <path d="M0 0h10v8H0z" fill="#d9dfe1" />
          <path d="M10 0v8H4z" fill="#b3babd" />
        </svg>
        <Down className="text-[#dadada]" />
      </span>
    </div>
  )
}

function PathBar({ children }: { children?: ReactNode }) {
  return (
    <div className="flex h-[34px] shrink-0 items-center border-b border-black bg-linear-to-b from-[#484848] to-[#393939] pl-[7px]">
      <button type="button" aria-label="Back" className="mr-2.5">
        <Icon name="arrowL" className="size-3.5" />
      </button>
      <button type="button" aria-label="Forward" className="mr-[11px]">
        <Icon name="arrowR" className="size-3.5" />
      </button>
      <div className="flex h-[23px] min-w-0 flex-1 items-stretch border border-black border-t-[#222] bg-linear-to-b from-[#444] to-[#393939] text-[11px] text-[#c8c8c8]">
        <button type="button" className="flex items-center gap-1.5 pl-1">
          <Icon name="clap" />
          obj
        </button>
        <svg viewBox="0 0 8 22" className="ml-1.5 w-2" aria-hidden="true">
          <path d="M1 0l6 11-6 11" fill="none" stroke="#111" />
        </svg>
        <button type="button" className="flex items-center gap-1 pl-1">
          <Icon name="geo" className="size-[17px]" />
          algorithms
        </button>
        <button type="button" aria-label="Path history" className="ml-auto flex w-[18px] items-center justify-center bg-[#303030]">
          <Down />
        </button>
      </div>
      {children}
    </div>
  )
}

function PathExtras({ full }: { full?: boolean }) {
  return (
    <div className={clsx('flex items-center gap-2 overflow-hidden pl-2.5', full ? 'w-[135px]' : 'w-[44px]')}>
      <Icon name="pin" />
      <Icon name="target" />
      {full && (
        <>
          <span className="w-0.5" />
          <Icon name="shaded" />
          <Icon name="shapes" />
          <Icon name="white" className="size-[18px]" />
        </>
      )}
    </div>
  )
}

// Ground plane, given by the vanishing points of its two axes
const VX = [-4000, -260]
const VZ = [920, -260]
const O = [511.5, 352.7]
const LX = -0.043
const LZ = -0.14

function project(x: number, z: number) {
  const w = LX * x + LZ * z + 1
  return [0, 1].map((i) => ((LX * x * VX[i] + LZ * z * VZ[i] + O[i]) / w).toFixed(1)).join(' ')
}

function groundLines() {
  const minor: string[] = []
  const major: string[] = []
  for (let n = -60; n <= 20; n++) {
    const lines = n % 5 === 0 ? major : minor
    lines.push(`M${project(-12, n / 5)}L${project(5, n / 5)}`)
    lines.push(`M${project(n / 5, -13)}L${project(n / 5, 4)}`)
  }
  return { minor: minor.join(''), major: major.join('') }
}

const ground = groundLines()

const POINTS: [number, number, number][] = [
  [28, 515, 208], [32, 467, 223], [36, 417, 239], [15, 362, 255], [14, 406, 277], [13, 454, 298], [12, 506, 322],
  [29, 560, 225], [30, 609, 243], [31, 661, 262], [33, 512, 241], [37, 461, 258], [34, 561, 260], [38, 509, 278],
  [35, 613, 280], [39, 561, 300], [11, 366, 320], [10, 409, 342], [9, 455, 366], [8, 506, 391], [51, 559, 368],
  [50, 609, 346], [27, 656, 326], [7, 370, 381], [6, 411, 404], [5, 456, 429], [4, 505, 457], [49, 557, 432],
  [48, 606, 408], [23, 651, 387], [3, 373, 438], [2, 414, 462], [1, 457, 489], [0, 504, 517], [44, 555, 492],
  [40, 603, 467], [19, 647, 444],
]

function Viewport() {
  return (
    <div className="relative min-w-0 flex-1 overflow-hidden bg-linear-to-b from-[#668290] via-[#919fa6] to-[#bcc5c6]">
      <svg viewBox="0 0 984 870" preserveAspectRatio="xMidYMid slice" className="absolute inset-0 size-full">
        <path d={ground.minor} stroke="url(#gridFade)" fill="none" />
        <path d={ground.major} stroke="url(#gridFade)" strokeWidth="2" fill="none" />
        <path d="M600 223h9M633 176h9M657 135h8M680 102h6M699 75h5M727 31h5" stroke="#4d6878" strokeWidth="2" />
        <g fill="#73899a" fontFamily="Open Sans, sans-serif" fontWeight="700" fontSize="20">
          <text transform="translate(351 606) rotate(24) skewX(-20)">2</text>
          <text transform="translate(211 816) rotate(24) skewX(-20)" fontSize="26" fill="#7f929c">3</text>
          <g fill="#7d6f75" fontSize="11">
            <text transform="translate(142 303) skewX(-20)">-2</text>
            <text transform="translate(311 326) skewX(-20)">-1</text>
            <text transform="translate(703 380) skewX(-20)">1</text>
            <text transform="translate(921 409) skewX(-20)">2</text>
          </g>
        </g>
        <path d="M362 255 506 322 504 517 373 438z" fill="#003248" />
        <path d="M506 322 661 262 647 444 504 517z" fill="#00506f" />
        <path d="M515 208 661 262 506 322 362 255z" fill="#005070" />
        <path
          d="M467 223 613 280M417 239 561 300M560 225 406 277M609 243 454 298M366 320 506 391 656 326M370 381 505 457 651 387M406 277 414 462M454 298 457 489M561 300 555 492M613 280 603 467M506 322 661 262M506 322 504 517M515 208 362 255 373 438 504 517 647 444 661 262z"
          fill="none"
          stroke="#0a2a38"
          strokeWidth=".800"
        />
        <path
          d="M369 373l53 7M371 394l107 16M373 417l206 39M444 480l97 16M379 357l-9 11M409 374l-36 44M441 390l-43 61M512 422l-43 73M573 394l-62 121M629 370l-48 105M594 384l59 8M559 400l90 13M522 417l127 19"
          fill="none"
          stroke="#4d5f77"
        />
        <path d="M379 444l203 31M474 410l-44 61M629 370l24 3" fill="none" stroke="#4d5f77" strokeWidth="2" />
        <g fill="#1414f0" fontFamily="DejaVu Sans Mono, monospace" fontSize="10">
          {POINTS.map(([n, x, y]) => (
            <g key={n}>
              <rect x={x - 1} y={y - 1} width="3" height="3" />
              <text x={x} y={y + 12}>{n}</text>
            </g>
          ))}
        </g>
      </svg>
      <div className="relative flex h-full flex-col justify-between">
        <div className="flex items-start pt-1 pr-1.5 pl-4">
          <Icon name="camera" className="mt-2.5 size-6" />
          <span className="mt-3.5 ml-3 text-[13px] leading-4 font-bold text-white drop-shadow">View</span>
          <button type="button" className="ml-auto flex h-5 items-center gap-0.5 rounded-full border border-[#a9adae] bg-[#636b6e] px-1.5 text-[11px] text-[#dcdcdc]">
            Persp <Down className="text-white" />
          </button>
          <button type="button" className="ml-2 flex h-5 items-center gap-0.5 rounded-full border border-[#a9adae] bg-[#636b6e] px-1.5 text-[11px] text-[#dcdcdc]">
            No cam <Down className="text-white" />
          </button>
        </div>
        <div className="px-2 pb-[7px] text-[11px] leading-[15px] text-[#222]">
          <p className="whitespace-nowrap">
            Left mouse tumbles. Middle pans. Right dollies. Ctrl+Alt+Left box-zooms. Ctrl+Right zooms. Spacebar-Ctrl-Left tilts. Hold L for
            alternate tumble, dolly, and zoom. M or Alt+M for First Person
          </p>
          <div className="flex justify-between pr-1">
            <span>Navigation.</span>
            <span className="text-[#ccb765]">Education Edition</span>
          </div>
        </div>
      </div>
    </div>
  )
}

function ToolButton({ icon, on, menu }: { icon: string; on?: boolean; menu?: boolean }) {
  return (
    <button
      type="button"
      aria-label={icon}
      className={clsx(
        'flex w-full items-center justify-center gap-0 border',
        on ? 'border-[#35404a] bg-linear-to-b from-[#4d6784] to-[#6787a8]' : 'border-transparent',
      )}
    >
      <Icon name={icon} className="size-[18px]" />
      {menu && (
        <svg viewBox="0 0 4 6" className="-mr-1 h-1.5 w-1 self-end" aria-hidden="true">
          <path d="M0 0l4 3-4 3z" fill={on ? '#222' : '#858585'} />
        </svg>
      )}
    </button>
  )
}

function Rule({ className = 'my-1' }: { className?: string }) {
  return <hr className={clsx('border-[#525252]', className)} />
}

function LeftTools() {
  return (
    <aside className="flex w-[34px] shrink-0 flex-col border-r border-black bg-[#3a3a3a] px-1">
      <div className="-mx-1 h-2.5 border-b border-black bg-linear-to-b from-[#555] to-[#444]">
        <svg viewBox="0 0 8 8" className="ml-px size-2" aria-hidden="true">
          <path d="M7 0v8L0 4z" />
        </svg>
      </div>
      <div className="mt-1.5 grid h-[74px] grid-rows-3 border border-[#222] bg-[#444]">
        <ToolButton icon="cone" menu />
        <ToolButton icon="tiles" on menu />
        <ToolButton icon="yellowBox" menu />
      </div>
      <Rule />
      <div className="grid h-[196px] grid-rows-7">
        <ToolButton icon="select" menu />
        <ToolButton icon="lockFill" on />
        <ToolButton icon="moveObj" />
        <ToolButton icon="rotObj" />
        <ToolButton icon="scaleObj" />
        <ToolButton icon="pose" />
        <ToolButton icon="handles" menu />
      </div>
      <Rule />
      <div className="grid h-[112px] grid-rows-4">
        <ToolButton icon="magnetGrid" menu />
        <ToolButton icon="magnetCurve" menu />
        <ToolButton icon="magnetPoint" menu />
        <ToolButton icon="magnet" menu />
      </div>
      <Rule />
      <div className="grid h-[84px] grid-rows-3">
        <ToolButton icon="camera" on menu />
        <ToolButton icon="globe" />
        <ToolButton icon="lens" menu />
      </div>
      <div className="mt-auto grid h-[54px] grid-rows-2">
        <ToolButton icon="slate" menu />
        <ToolButton icon="filmReel" menu />
      </div>
    </aside>
  )
}

const DISPLAY_TOP: [string, boolean, boolean][] = [
  ['plane', true, true], ['uv', false, true], ['lock', false, false], ['bulbOff', false, false], ['headlight', false, true],
  ['bulbPlus', true, true], ['bulbShadow', false, true], ['checker', true, true], ['specs', false, true], ['specsCam', false, true],
]
const DISPLAY_MID: [string, boolean, boolean][] = [
  ['dot', true, false], ['normal', false, false], ['trail', false, false], ['pointNum', true, false], ['prim', false, false],
  ['primNum', false, false], ['hull', false, false], ['wedge', true, false], ['checkFlat', true, true], ['diamond', false, false],
  ['bowtie', false, false], ['axis', false, false], ['list', false, false], ['image', true, true],
]

function NumberTool({ on }: { on: boolean }) {
  return (
    <button
      type="button"
      aria-label={on ? 'Point numbers' : 'Primitive numbers'}
      className={clsx('flex flex-col items-center justify-center', on && 'bg-linear-to-b from-[#4d6784] to-[#6787a8]')}
    >
      <span className="text-[9px] leading-[9px] font-bold text-[#dfe3e4]">12</span>
      <svg viewBox="0 0 16 7" className="h-[7px] w-4" aria-hidden="true">
        {on ? <circle cx="4" cy="3.500" r="3" fill="#dfe3e4" /> : <path d="M0 7l7-5 9 5z" fill="#b5b9ba" />}
      </svg>
    </button>
  )
}

function DisplayTools() {
  return (
    <aside className="flex w-[25px] shrink-0 flex-col border-l border-black bg-[#3a3a3a] px-px">
      <div className="h-2.5 border-b border-black bg-linear-to-b from-[#555] to-[#444]">
        <svg viewBox="0 0 8 8" className="ml-auto size-2" aria-hidden="true">
          <path d="M0 0v8l8-4z" />
        </svg>
      </div>
      <div className="mt-0.5 grid h-[248px] grid-rows-10">
        {DISPLAY_TOP.map(([icon, on, menu]) => (
          <ToolButton key={icon} icon={icon} on={on} menu={menu} />
        ))}
      </div>
      <Rule className="my-0.5" />
      <div className="grid h-[350px] grid-rows-14">
        {DISPLAY_MID.map(([icon, on, menu]) =>
          icon.endsWith('Num') ? <NumberTool key={icon} on={on} /> : <ToolButton key={icon} icon={icon} on={on} menu={menu} />,
        )}
      </div>
      <Rule className="my-1.5" />
      <div className="grid h-[26px]">
        <ToolButton icon="mapPin" on menu />
      </div>
      <span className="flex-1" />
      <Rule />
      <div className="grid h-[74px] grid-rows-3">
        <ToolButton icon="info" />
        <ToolButton icon="quad" on />
        <ToolButton icon="eye" menu />
      </div>
    </aside>
  )
}

function ViewToolbar() {
  return (
    <div className="flex h-8 shrink-0 items-center border-t border-b border-t-[#555] border-b-black bg-[#2d2d2d] pr-1.5">
      <span className="flex h-full w-[9px] justify-center border-r border-black bg-[#444] pt-0.5 text-[6px] leading-[8px] text-black">▲</span>
      <Icon name="dots" className="ml-1.5 size-4" />
      <Down className="mt-4" />
      <div className="mx-auto flex h-full items-center gap-2 pl-2">
        <Icon name="orbitPick" className="size-[18px]" />
        <Down className="mt-4 -ml-2.5" />
        <Icon name="arrowPick" className="size-[18px]" />
        <Down className="mt-4 -ml-2.5" />
        <Icon name="camPick" className="size-[18px]" />
        <Down className="mt-4 -ml-2.5" />
        <span className="flex h-6 w-5 items-center justify-center bg-[#5d7fa3]">
          <Icon name="reel" className="size-[18px]" />
        </span>
        <Icon name="zoomBox" />
        <span className="h-6 w-px bg-[#444]" />
        <Icon name="noRect" />
        <span className="h-6 w-px bg-[#444]" />
        <Icon name="bug" />
        <Icon name="gearBox" />
      </div>
      <Icon name="snaps" />
      <Down className="mt-4 mr-1 -ml-1" />
      <Icon name="help" />
    </div>
  )
}

const FIELD = 'min-w-0 border border-[#262626] border-b-[#444] bg-[#131313] px-1 font-[Liberation_Mono,monospace] text-[12px] text-[#dcdcdc]'

function ParmRow({ label, children }: { label: string; children: ReactNode }) {
  return (
    <div className="flex h-[25px] items-center">
      <span className="w-[139px] shrink-0 text-right text-[11px] text-[#b5b5b5]">{label}</span>
      <div className="flex min-w-0 flex-1 items-center pl-[15px]">{children}</div>
    </div>
  )
}

function Vector({ label, values }: { label: string; values: string[] }) {
  return (
    <ParmRow label={label}>
      <div className="grid flex-1 grid-cols-3 gap-0.5">
        {values.map((v, i) => (
          <input key={i} aria-label={`${label} ${'xyz'[i]}`} defaultValue={v} className={clsx(FIELD, 'h-[23px]', v === '100' && 'font-bold')} />
        ))}
      </div>
    </ParmRow>
  )
}

function SliderRow({ label, initial, max, ticks }: { label: string; initial: number; max: number; ticks?: boolean }) {
  const [value, setValue] = useState(initial)
  const pct = `${(value / max) * 100}%`
  return (
    <ParmRow label={label}>
      <input
        aria-label={label}
        value={value}
        onChange={(e) => setValue(Number(e.target.value) || 0)}
        className={clsx(FIELD, 'h-[23px] w-[74px]', ticks && 'font-bold')}
      />
      <div className="relative mr-[3px] ml-1 flex h-[23px] min-w-0 flex-1 items-center">
        <input
          type="range"
          aria-label={`${label} slider`}
          min={0}
          max={max}
          value={value}
          onChange={(e) => setValue(Number(e.target.value))}
          className="h-[5px] w-full appearance-none border-y border-black [&::-webkit-slider-thumb]:h-5 [&::-webkit-slider-thumb]:w-1.5 [&::-webkit-slider-thumb]:appearance-none [&::-webkit-slider-thumb]:border [&::-webkit-slider-thumb]:border-[#222] [&::-webkit-slider-thumb]:bg-[#8e9494]"
          style={{ background: `linear-gradient(to right, #0e4fa3 ${pct}, #000 ${pct})` }}
        />
        {ticks && (
          <div className="absolute inset-x-0.5 bottom-1 flex justify-between">
            {Array.from({ length: 11 }, (_, i) => (
              <span key={i} className="h-0.5 w-px bg-[#8a8a8a]" />
            ))}
          </div>
        )}
      </div>
    </ParmRow>
  )
}

function Parameters() {
  return (
    <section className="flex h-[254px] shrink-0 flex-col bg-[#3a3a3a]">
      <div className="flex h-[27px] items-center border-b border-black pl-[17px]">
        <Down className="mt-4" />
        <label htmlFor="op-name" className="mr-px ml-0.5 text-[11px] font-bold text-[#b9b9b9]">
          PG::Simple Box
        </label>
        <input id="op-name" defaultValue="SimpleBox1" className={clsx(FIELD, 'h-[23px] flex-1')} />
        <div className="flex w-[124px] items-center gap-2.5 overflow-hidden pl-2">
          <Icon name="gear" />
          <Icon name="scoop" />
          <Icon name="search" />
          <Icon name="info" />
          <Icon name="help" />
        </div>
      </div>
      <div className="mt-px">
        <Vector label="Size" values={['1', '1', '1']} />
        <Vector label="Rotate" values={['0', '100', '0']} />
        <Vector label="Center" values={['0', '0', '0']} />
        <SliderRow label="Uniform Scale" initial={1} max={1} />
        <SliderRow label="Axis Division" initial={4} max={10} ticks />
        <ParmRow label="Box Type">
          <label className="flex h-[21px] w-[93px] items-center border border-black bg-linear-to-b from-[#5a5a5a] to-[#484848]">
            <select aria-label="Box Type" className="min-w-0 flex-1 appearance-none bg-transparent pl-3 text-[10px] font-bold text-[#bcbcbc]">
              <option>Primitive</option>
            </select>
            <span className="flex w-5 justify-center self-stretch bg-[#3d3d3d] py-[3px]">
              <UpDown />
            </span>
          </label>
        </ParmRow>
        <div className="flex h-6 items-center pl-[154px]">
          <label className="flex items-center gap-1.5 text-[10px] font-bold text-[#bcbcbc]">
            <input type="checkbox" defaultChecked className="peer sr-only" />
            <svg viewBox="0 0 13 13" className="size-[13px] bg-[#111]" aria-hidden="true">
              <path d="M2 7l4 5 5-11-5 6z" fill="#e3e3e3" stroke="#e3e3e3" />
            </svg>
            Add Color
          </label>
        </div>
        <ParmRow label="Color">
          <button type="button" aria-label="Color swatch" className="h-[21px] w-[45px] rounded-xs border-2 border-[#4c4c4c] bg-[#006ec8]" />
          <Icon name="wheel" className="mx-1 size-[21px]" />
          <div className="grid flex-1 grid-cols-3 gap-0.5">
            <input aria-label="Red" defaultValue="0" className={clsx(FIELD, 'h-[23px]')} />
            <input aria-label="Green" defaultValue="0.25" className={clsx(FIELD, 'h-[23px] font-bold')} />
            <input aria-label="Blue" defaultValue="0.5" className={clsx(FIELD, 'h-[23px] font-bold')} />
          </div>
        </ParmRow>
      </div>
    </section>
  )
}

interface NetNode {
  name: string
  x: number
  y: number
  input?: boolean
  kind?: 'curve' | 'resample' | 'add' | 'transform'
}

const NODES: NetNode[] = [
  { name: 'curve1', x: 63, y: 113, input: true, kind: 'curve' },
  { name: 'resample1', x: 63, y: 197, input: true, kind: 'resample' },
  { name: 'VisvalingamLineSimplification1', x: 63, y: 284, input: true },
  { name: 'SimpleBox1', x: 412, y: 93 },
  { name: 'transform1', x: 478, y: 167, input: true, kind: 'transform' },
  { name: 'CartesianGrid1', x: 414, y: 216 },
  { name: 'add1', x: 414, y: 299, input: true, kind: 'add' },
  { name: 'simple_attribute1', x: 414, y: 362, input: true },
  { name: 'ConvexHull1', x: 678, y: 352, input: true },
]

function NodeShape({ node }: { node: NetNode }) {
  const { x, y, kind, name } = node
  const cx = x + 36
  return (
    <g>
      {kind === 'transform' && (
        <>
          <circle cx={cx} cy={y + 11} r="36" fill="#5f738d" />
          <circle cx={cx} cy={y + 11} r="24" fill="#8a7aa6" />
        </>
      )}
      {node.input && <circle cx={cx} cy={y - 6} r="3.500" fill="#aab4b9" />}
      <circle cx={cx} cy={y + 28} r="3.500" fill="#aab4b9" />
      {name === 'SimpleBox1' && <rect x={x - 2} y={y - 2} width="76" height="26" rx="4" fill="none" stroke="#d8bb2c" strokeWidth="2" />}
      <rect x={x} y={y} width="72" height="22" rx="3" fill="#bdc5c7" stroke={name === 'SimpleBox1' ? '#1c1c1c' : '#8b9193'} />
      {kind === 'transform' && <path d={`M${x + 64} ${y + 1}h5q2 0 2 2v16q0 2-2 2h-6z`} fill="#0070cc" />}
      <path
        d={`M${x + 10} ${y}l-2 22M${x + 20} ${y}l-2 22M${x + 54} ${y}l-2 22M${x + 63} ${y}l-2 22`}
        stroke="#858d90"
        fill="none"
      />
      {kind === 'curve' && (
        <>
          <path d={`M${x + 28} ${y + 5}c5-2 12-2 16 0M${x + 28} ${y + 18}l6-4`} fill="none" stroke="#7c8488" />
          <path d={`M${x + 30} ${y + 5}l10 4 2 6-5 3z`} fill="#e6eaeb" stroke="#6d7c86" />
          <circle cx={x + 39} cy={y + 15} r="3.500" fill="#4776a8" />
        </>
      )}
      {kind === 'resample' && (
        <path d={`M${x + 28} ${y + 10}c3-9 6-5 8-2s6 2 8-1M${x + 28} ${y + 18}c3-9 6-5 8-2s6 2 8-1`} stroke="#767b7d" fill="none" />
      )}
      {kind === 'add' && <path d={`M${x + 28} ${y + 15}c3-12 7-9 9-4s5 4 8 0`} stroke="#555b5d" fill="none" />}
      {kind === 'transform' && (
        <>
          <path d={`M${x + 31} ${y + 6}l6-3 5 4 4 2-3 3 3 5-5 1-4-3-4 3-6-2 3-4z`} fill="#4a6f99" stroke="#7d9bb8" />
          <circle cx={x + 37} cy={y + 8} r="3" fill="#8ba7c0" />
        </>
      )}
    </g>
  )
}

function NetBox({ title, className }: { title: string; className: string }) {
  return (
    <div className={clsx('absolute rounded-lg border border-[#6f6f6f] bg-[#5b5b5b]', className)}>
      <div className="flex h-[22px] items-center rounded-t-lg border-b border-[#7c7c7c] bg-[#737371] pb-0.5 text-[14px] leading-[18px] text-[#151515]">
        <span className="mr-[7px] ml-1.5 h-0.5 w-3 bg-[#151515]" />
        {title}
      </div>
    </div>
  )
}

function Network() {
  return (
    <div className="relative min-h-0 flex-1 overflow-hidden bg-[#303030]">
      <div className="absolute inset-y-0 right-0 left-[649px] border-l border-[#747474] bg-[#5b5b5b]" />
      <NetBox title="Line simplification" className="top-[77px] left-[34px] h-[244px] w-[203px]" />
      <NetBox title="Simple Geometry" className="top-[57px] left-[383px] h-[358px] w-[251px]" />
      <svg className="absolute inset-0 size-full">
        <path
          d="M112 0v600M256 0v600M400 0v600M544 0v600M688 0v600M832 0v600M0 55h1400M0 127h1400M0 198h1400M0 270h1400M0 342h1400M0 414h1400M0 486h1400M0 558h1400"
          stroke="#fff"
          strokeOpacity=".05"
        />
        <path d="M99 141v50M99 225v53" stroke="#64839b" />
        <path d="M450 326v30" stroke="#93989b" />
        <path d="M714 346q2-18 17-18h700" stroke="#7390a6" fill="none" />
        {NODES.map((n) => (
          <NodeShape key={n.name} node={n} />
        ))}
        <path d="M448 121c1 11 6 19 18 19 32 2 44-3 48 21" stroke="#9a9c9d" fill="none" />
        <path d="M147 136h10v7h-10zM149 136c0-7 6-7 6 0" stroke="#444" fill="#555" />
        <circle cx="565" cy="193" r="4" fill="#0c0c0c" stroke="#ddd" />
        <path d="M565 191v2h2" stroke="#eee" fill="none" />
      </svg>
      <span className="absolute top-3 left-[349px] text-[19px] leading-6 text-[#434343]">Education Edition</span>
      <span className="absolute top-[14px] left-[736px] text-[22px] leading-7 font-bold text-[#797979]">Geometry</span>
      {NODES.map((n) => (
        <span
          key={n.name}
          className="absolute text-[14px] leading-[20px] whitespace-nowrap text-[#c0c6c8]"
          style={{ left: n.x + 80, top: n.y }}
        >
          {n.name}
        </span>
      ))}
    </div>
  )
}

function NetworkMenu() {
  return (
    <div className="flex h-[25px] shrink-0 items-center border-b border-black bg-linear-to-b from-[#333] to-[#3c3c3c]">
      <span className="flex h-full w-2 justify-center border-r border-black bg-[#444] text-[6px] leading-[8px] text-black">▲</span>
      <nav className="flex gap-[13px] pl-2.5 text-[12px] text-[#c4c4c4]">
        {['Add', 'Edit', 'Go', 'View', 'Tools', 'Layout', 'Labs', 'Help'].map((m) => (
          <button key={m} type="button">
            {m}
          </button>
        ))}
      </nav>
      <div className="ml-auto flex w-[301px] items-center gap-2 overflow-hidden">
        <Icon name="tools" />
        <Icon name="tree" />
        <Icon name="rows" className="mr-4 size-4" />
        <Icon name="palette" />
        <Icon name="outline" className="mr-4 size-4" />
        <Icon name="netBox" />
        <Icon name="note" />
        <Icon name="addImage" />
        <Icon name="asset" className="mr-4 size-4" />
        <Icon name="search" />
        <Icon name="eye" />
      </div>
    </div>
  )
}

const TRANSPORT: [string, string][] = [
  ['First frame', 'M3 5h3v14H3zM14 5v14l-8-7zM23 5v14l-8-7z'],
  ['Play back', 'M19 4v16L6 12z'],
  ['Stop', 'M5 5h14v14H5z'],
  ['Play', 'M7 4v16l12-8z'],
  ['Last frame', 'M1 5v14l8-7zM10 5v14l8-7zM18 5h3v14h-3z'],
]

const OPTIONS: [string, ReactNode][] = [
  ['Set keys', <path key="a" d="M4 3h14v16H4zM11 9l10 9-5 0-3 5z" fill="#d0d3d3" stroke="#333" />],
  ['Audio', <g key="b"><path d="M2 9h5l7-6v18l-7-6H2z" fill="#888" stroke="#ddd" /><path d="M16 3c5 5 5 13 0 18" fill="none" stroke="#ddd" strokeWidth="2" /></g>],
  ['Loop', <path key="c" d="M5 17h17v-4C22 2 9 0 6 8L3 6v8h9l-3-3c2-5 9-4 9 2H3v4z" fill="#d8dbdb" stroke="#333" strokeWidth=".500" />],
  ['Real time', <g key="d"><circle cx="12" cy="12" r="9.500" fill="#555" stroke="#e8e8e8" strokeWidth="2.500" /><path d="M12 6v11M12 12h5" stroke="#fff" strokeWidth="2.500" /></g>],
  ['Range', <path key="e" d="M2 4v14M7 6v8M12 6v8M17 6v8M22 4v14" stroke="#999" strokeWidth="2" />],
  ['Step', <g key="f"><path d="M2 14h20" stroke="#aaa" strokeWidth="2" /><circle cx="13" cy="14" r="4" fill="#ddd" /><path d="M5 8l4-3v6zM19 8l-4-3v6z" fill="#666" /></g>],
]

const KEYCAP = 'flex items-center justify-center border border-black bg-linear-to-b'

function Playbar() {
  const labels = [24, 48, 72, 96, 120, 144, 168]
  const at = (frame: number) => ({ left: `${((frame - 1) / 239) * 100}%` })
  return (
    <footer className="flex h-[72px] shrink-0 border-t border-b border-t-[#666] border-b-black bg-[#2d2d2d]">
      <span className="flex w-2 shrink-0 items-end justify-center border-r border-black bg-[#3c3c3c] text-[6px] text-black">▼</span>
      <div className="flex min-w-0 flex-1 flex-col pr-2 pl-1">
        <div className="flex h-9 pt-2">
          <div className="relative flex h-7 w-[220px] shrink-0">
            {TRANSPORT.map(([label, d], i) => (
              <button
                key={label}
                type="button"
                aria-label={label}
                className={clsx(KEYCAP, 'w-[27px]', i === 2 ? 'from-[#4d6784] to-[#6c8db0]' : 'from-[#525252] to-[#404040]')}
              >
                {i === 3 ? (
                  <span className="flex size-6 shrink-0 items-center justify-center rounded-full bg-[#d0b52c]">
                    <svg viewBox="0 0 24 24" className="size-5"><path d={d} fill="none" stroke="#a0782a" strokeWidth="2" /></svg>
                  </span>
                ) : (
                  <svg viewBox="0 0 24 24" className="size-[19px]"><path d={d} fill="#d5d8d9" /></svg>
                )}
              </button>
            ))}
            <input aria-label="Current frame" defaultValue="1" className={clsx(FIELD, 'mx-1 w-[46px]')} />
            <button type="button" aria-label="Previous frame" className={clsx(KEYCAP, 'w-[14px] from-[#525252] to-[#404040]')}>
              <svg viewBox="0 0 8 8" className="size-2 shrink-0"><path d="M5 0v8L0 4zM6 0h2v8H6z" fill="#ccc" /></svg>
            </button>
            <button type="button" aria-label="Next frame" className={clsx(KEYCAP, 'w-[14px] from-[#525252] to-[#404040]')}>
              <svg viewBox="0 0 8 8" className="size-2 shrink-0"><path d="M3 0v8l5-4zM0 0h2v8H0z" fill="#ccc" /></svg>
            </button>
            <div role="tooltip" className="absolute top-[14px] left-[117px] z-10 flex h-5 w-[83px] items-center gap-3 bg-black pl-1 text-[10px] text-[#d5d5d5]">
              Play <i className="text-[#999]">UpArrow</i>
            </div>
            <svg viewBox="0 0 14 22" className="absolute top-[14px] left-[93px] z-20 h-[22px] w-3.5" aria-hidden="true">
              <path d="M1 1v16l4-4 3 8 3-1-3-7h5z" fill="#fff" stroke="#222" />
            </svg>
          </div>
          <div className="relative h-7 flex-1">
            <div className="absolute inset-x-0 top-[15px] h-px bg-[#a0a0a0]" />
            {Array.from({ length: 40 }, (_, i) => (i + 1) * 6).map((f) => (
              <span key={f} className={clsx('absolute w-px bg-[#a0a0a0]', f % 24 ? 'top-[11px] h-2' : 'top-2 h-3.5')} style={at(f)} />
            ))}
            {labels.map((f) => (
              <span key={f} className="absolute -top-1.5 text-[9px] leading-[12px] text-[#999]" style={at(f)}>
                {f}
              </span>
            ))}
            <svg viewBox="0 0 25 23" className="absolute -top-1.5 left-0 h-[23px] w-[25px]" aria-hidden="true">
              <path d="M1 1h23v16H5l-4 5z" fill="#080808" stroke="#e8e8e8" strokeWidth="1.400" />
            </svg>
            <span className="absolute -top-1 left-[9px] text-[12px] leading-[14px] text-white">1</span>
          </div>
        </div>
        <div className="mt-[5px] flex h-7 items-center">
          <div className="flex h-6 w-[220px] shrink-0">
            {OPTIONS.map(([label, art], i) => (
              <button
                key={label}
                type="button"
                aria-label={label}
                className={clsx(KEYCAP, 'w-[27px]', i === 3 ? 'from-[#4d6784] to-[#6c8db0]' : 'from-[#525252] to-[#404040]')}
              >
                <svg viewBox="0 0 24 24" className="size-[18px]">{art}</svg>
              </button>
            ))}
            <button type="button" aria-label="Previous key" className="ml-1 flex w-6 items-center justify-center border border-black bg-[#333]">
              <svg viewBox="0 0 8 8" className="size-2.5"><path d="M7 0v8L2 4zM0 0h1v8H0z" fill="#555" /></svg>
            </button>
            <button type="button" aria-label="Next key" className="flex w-6 items-center justify-center border border-black bg-[#333]">
              <svg viewBox="0 0 8 8" className="size-2.5"><path d="M1 0v8l5-4zM7 0h1v8H7z" fill="#555" /></svg>
            </button>
          </div>
          <input aria-label="Global start" defaultValue="1" className={clsx(FIELD, 'h-5 w-[43px]')} />
          <input aria-label="Range start" defaultValue="1" className={clsx(FIELD, 'ml-[3px] h-5 w-[42px]')} />
          <svg viewBox="0 0 6 12" className="ml-0.5 h-3 w-1.5"><path d="M0 0l6 6-6 6z" fill="#aaa" /></svg>
          <div className="h-[3px] flex-1 bg-[#757171]" />
          <svg viewBox="0 0 6 12" className="mr-0.5 h-3 w-1.5"><path d="M6 0 0 6l6 6z" fill="#aaa" /></svg>
          <input aria-label="Range end" defaultValue="240" className={clsx(FIELD, 'h-5 w-[43px]')} />
          <input aria-label="Global end" defaultValue="240" className={clsx(FIELD, 'ml-[3px] h-5 w-[42px]')} />
        </div>
      </div>
      <div className="flex w-[236px] shrink-0 flex-col text-[11px] text-[#bdbdbd]">
        <div className="mt-2 ml-[82px] flex h-[25px] items-center border border-black bg-linear-to-b from-[#505050] to-[#404040] pl-[22px] text-[10px]">
          0 keys, 0/0 channels
          <span className="ml-auto text-[8px] text-[#8a8a8a]">▲</span>
        </div>
        <div className="mt-1 flex h-6 items-center">
          <svg viewBox="0 0 56 26" className="-mt-5 h-[26px] w-14" aria-hidden="true">
            <circle cx="18" cy="5" r="20" fill="#343434" stroke="#222" />
            <path d="M37 2h15v13H40z" fill="#3b3b3b" stroke="#111" />
            <path d="M42 4h7l-3 4z" fill="#999" />
            <path d="M12 14l9-9M12 14l3 3M15 11l2 3" stroke="#666" strokeWidth="2.500" />
            <circle cx="23" cy="4" r="3" fill="none" stroke="#666" strokeWidth="2" />
          </svg>
          <span className="ml-[3px] flex size-6 items-center justify-center border border-[#666] bg-[#222]">
            <Icon name="curves" />
          </span>
          <label className="ml-1 flex h-[22px] flex-1 items-center border border-black bg-linear-to-b from-[#525252] to-[#424242]">
            <select aria-label="Key scope" className="min-w-0 flex-1 appearance-none bg-transparent pl-3 text-[10px]">
              <option>Key All Channels</option>
            </select>
            <span className="flex w-4 items-center justify-center self-stretch bg-[#333]">
              <UpDown />
            </span>
          </label>
        </div>
      </div>
    </footer>
  )
}

function StatusBar() {
  return (
    <div className="flex h-[23px] shrink-0 items-stretch justify-end bg-[#1b1b1b] text-[#bdbdbd]">
      <div className="flex w-[54px] items-center gap-3 bg-[#333] pl-1">
        <Icon name="brain" className="size-[17px]" />
        <Icon name="refresh" className="size-3.5" />
      </div>
      <label className="flex w-[108px] items-center border-l border-[#555] bg-linear-to-b from-[#4e4e4e] to-[#404040]">
        <select aria-label="Update mode" className="min-w-0 flex-1 appearance-none bg-transparent pl-3.5 text-[10px]">
          <option>Auto Update</option>
        </select>
        <span className="flex w-4 items-center justify-center self-stretch bg-[#333]">
          <UpDown />
        </span>
      </label>
    </div>
  )
}

function Recorder() {
  return (
    <section
      aria-label="ScreenToGif"
      className="absolute right-[144px] bottom-[61px] z-30 flex h-[96px] w-[393px] flex-col bg-white font-['Open_Sans',sans-serif] text-[11px] text-[#1a1a1a]"
    >
      <div className="flex h-[33px] items-center pr-[9px] pl-1.5">
        <span className="text-[15px] text-[#1b5699]">ScreenToGif</span>
        <span className="ml-auto text-[11px] text-[#6f6f6f]">Click or press keys to capture</span>
        <button type="button" aria-label="Minimize" className="ml-[52px]">
          <svg viewBox="0 0 14 14" className="size-3.5"><path d="M0 7h14" stroke="#888" strokeWidth="1.500" /></svg>
        </button>
        <button type="button" aria-label="Close" className="ml-4">
          <svg viewBox="0 0 14 14" className="size-3.5"><path d="M0 0l14 14M14 0 0 14" stroke="#333" /></svg>
        </button>
      </div>
      <div className="mb-[3px] flex flex-1">
        <button type="button" className="flex w-[69px] flex-col items-center border-r border-[#d5d5d5] pt-0.5">
          <svg viewBox="0 0 24 26" className="mb-0.5 h-[26px] w-6" aria-hidden="true">
            <g fill="none" stroke="#7b7b7b">
              <circle cx="17" cy="7" r="4" strokeWidth="3" />
              <circle cx="17" cy="7" r="6" strokeWidth="2" strokeDasharray="2.400 2.300" />
              <circle cx="8" cy="18" r="5" strokeWidth="3.500" />
              <circle cx="8" cy="18" r="7.500" strokeWidth="2" strokeDasharray="3 2.900" />
            </g>
          </svg>
          Options
        </button>
        <div className="flex w-[137px] flex-col items-center justify-between border-r border-[#d5d5d5] pt-1.5 pb-0.5">
          <span className="text-[#666]">...</span>
          <button type="button" className="flex items-center gap-1.5 whitespace-nowrap">
            <svg viewBox="0 0 12 20" className="h-5 w-3" aria-hidden="true">
              <path d="M1 1v16l3-3 3 5 2-1-2-5h5z" fill="#fff" stroke="#aaa" />
            </svg>
            User interaction
            <Down className="ml-1 text-[#3f73ad]" />
          </button>
        </div>
        <div className="flex w-[118px] flex-col justify-between border-r border-[#d5d5d5] pt-0.5 pr-1 pb-1 pl-[5px]">
          <div className="flex items-center justify-between">
            <input aria-label="Width" defaultValue="1908" className="h-[26px] w-[41px] border border-[#b5babd] text-center text-[#666]" />
            x
            <input aria-label="Height" defaultValue="1132" className="h-[26px] w-[40px] border border-[#b5babd] text-center text-[#666]" />
            px
          </div>
          <div className="flex items-center justify-between px-1 text-[#9a9a9a]">
            <Icon name="crop" />
            Area
            <Down className="text-[#bbb]" />
          </div>
        </div>
        <button type="button" className="flex flex-1 flex-col items-center pt-0.5 leading-[14px]">
          <svg viewBox="0 0 20 24" className="mb-1.5 h-6 w-5" aria-hidden="true">
            <path d="M0 0h9v24H0zM11 0h9v24h-9z" fill="#5079a8" />
          </svg>
          Pause
          <span className="text-[9px] leading-[11px] text-[#888]">F7</span>
        </button>
      </div>
    </section>
  )
}

export default function App() {
  return (
    <div className="relative flex h-screen w-full flex-col overflow-hidden bg-[#3a3a3a] font-['Noto_Sans_CJK_SC',sans-serif] text-[#999]">
      <svg className="absolute size-0" aria-hidden="true">
        <defs>
          <radialGradient id="metal" cx=".4" cy=".3" r=".8">
            <stop offset="0" stopColor="#dfe6e8" />
            <stop offset="1" stopColor="#64767e" />
          </radialGradient>
          <radialGradient id="white" cx=".5" cy=".45" r=".6">
            <stop offset="0" stopColor="#f2f4f4" />
            <stop offset="1" stopColor="#adb4b5" />
          </radialGradient>
          <linearGradient id="blue" x1="0" y1="0" x2="1" y2="1">
            <stop offset="0" stopColor="#c2d3de" />
            <stop offset="1" stopColor="#3c6284" />
          </linearGradient>
          <linearGradient id="gridFade" gradientUnits="userSpaceOnUse" x1="0" y1="0" x2="0" y2="870">
            <stop offset="0" stopColor="#536f7e" stopOpacity=".25" />
            <stop offset=".3" stopColor="#607a87" stopOpacity=".6" />
            <stop offset="1" stopColor="#84959d" stopOpacity=".9" />
          </linearGradient>
        </defs>
      </svg>
      <TopBar />
      <div className="flex h-[59px] shrink-0 border-t border-b border-black">
        <span className="w-2 shrink-0 border-r border-black bg-[#3c3c3c] text-center text-[6px] leading-[8px] text-black">▲</span>
        <div className="flex min-w-0 flex-[954_1_0%] flex-col">
          <Shelf tabs={CREATE_TABS} tools={CREATE_TOOLS} />
        </div>
        <span className="flex w-[11px] shrink-0 items-center justify-center border-x border-black bg-[#444]">
          <span className="h-4 w-[5px] border-x-2 border-dotted border-black" />
        </span>
        <div className="flex min-w-0 flex-[935_1_0%] flex-col">
          <Shelf tabs={LIGHT_TABS} tools={LIGHT_TOOLS} tight />
        </div>
      </div>
      <main className="flex min-h-0 flex-1">
        <span className="w-[5px] shrink-0 border-r border-[#222] bg-[#484848]" />
        <section className="flex min-w-0 flex-[1044_1_0%] flex-col border-r border-black">
          <PaneTabs tabs={['Scene View', 'Animation Editor', 'Render View', 'Composite View', 'Motion FX View', 'Geometry Spreadsheet']} />
          <PathBar>
            <PathExtras full />
          </PathBar>
          <ViewToolbar />
          <div className="flex min-h-0 flex-1">
            <LeftTools />
            <Viewport />
            <DisplayTools />
          </div>
        </section>
        <span className="flex w-[7px] shrink-0 items-center justify-center bg-[#484848]">
          <span className="h-5 w-1 border-x border-dotted border-[#999]" />
        </span>
        <section className="flex min-w-0 flex-[852_1_0%] flex-col border-l border-[#222]">
          <PaneTabs tabs={['SimpleBox1', 'Take List', 'Performance Monitor']} />
          <PathBar>
            <PathExtras />
          </PathBar>
          <Parameters />
          <div className="flex h-[7px] shrink-0 items-center justify-center gap-3 border-t border-[#707070] bg-[#444] text-[5px] leading-[5px] text-[#999]">
            <span>▲</span>
            <span className="h-1 w-5 border-y border-dotted border-[#999]" />
            <span>▼</span>
          </div>
          <PaneTabs tabs={['/obj/algorithms', 'Tree View', 'Material Palette', 'Asset Browser']} />
          <PathBar>
            <PathExtras />
          </PathBar>
          <NetworkMenu />
          <Network />
        </section>
      </main>
      <Playbar />
      <StatusBar />
      <Recorder />
    </div>
  )
}
